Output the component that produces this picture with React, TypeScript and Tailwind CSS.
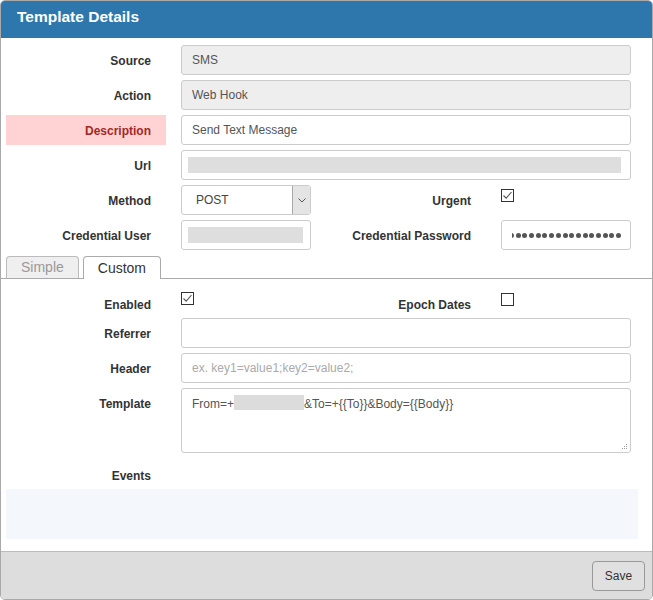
import React from "react";

const Check = ({ checked }: { checked?: boolean }) => (
  <div className="w-[13px] h-[13px] border border-[#333] bg-white flex items-center justify-center">
    {checked && (
      <svg width="11" height="11" viewBox="0 0 11 11">
        <path d="M1.5 5.5 L4.2 8.2 L9.5 2" fill="none" stroke="#555" strokeWidth="1.1" />
      </svg>
    )}
  </div>
);

const Label = ({ children, className = "" }: { children: React.ReactNode; className?: string }) => (
  <div className={`text-right pr-[15px] font-bold text-[12px] text-[#333] h-[30px] leading-[32px] ${className}`}>{children}</div>
);

const Field = ({ children, disabled, className = "" }: { children?: React.ReactNode; disabled?: boolean; className?: string }) => (
  <div
    className={`h-[30px] border border-[#ccc] rounded-[3px] flex items-center pl-[10px] text-[12px] text-[#555] ${
      disabled ? "bg-[#eeeeee]" : "bg-white"
    } ${className}`}
  >
    {children}
  </div>
);

const Blur = ({ className = "" }: { className?: string }) => (
  <div className={`h-[16px] bg-[#dedede] blur-[0.6px] ${className}`} />
);

export default function App() {
  return (
    <div className="w-[653px] h-[600px] bg-white font-['Liberation_Sans',Arial,sans-serif]">
      <div className="h-[600px] border border-[#a9a9a9] rounded-[5px] overflow-hidden flex flex-col">
        {/* Header */}
        <div className="h-[37px] bg-[#2e77ad] flex items-start pt-[7px] px-[16px] shrink-0">
          <span className="text-white font-bold text-[15.5px] leading-[18px]">Template Details</span>
        </div>

        {/* Main fields */}
        <div className="pt-[7px] pl-[5px] grid grid-cols-[160px_130px_160px_130px] gap-x-[15px] gap-y-[5px]">
          <Label>Source</Label>
          <Field disabled className="col-span-3">SMS</Field>

          <Label>Action</Label>
          <Field disabled className="col-span-3">Web Hook</Field>

          <Label className="bg-[#ffd3d3] !text-[#a32828]">Description</Label>
          <Field className="col-span-3">Send Text Message</Field>

          <Label>Url</Label>
          <Field className="col-span-3 !pl-[6px] pr-[9px]">
            <Blur className="w-full" />
          </Field>

          <Label>Method</Label>
          <div className="h-[30px] border border-[#ccc] rounded-[3px] flex bg-white overflow-hidden w-[130px]">
            <div className="flex-1 flex items-center pl-[14px] text-[12px] text-[#444]">POST</div>
            <div className="w-[18px] bg-[#e4e4e4] border-l border-[#aaa] flex items-center justify-center">
              <svg width="8" height="5" viewBox="0 0 8 5">
                <path d="M0.5 0.5 L4 4 L7.5 0.5" fill="none" stroke="#555" strokeWidth="1" />
              </svg>
            </div>
          </div>
          <Label>Urgent</Label>
          <div className="pt-[4px]">
            <Check checked />
          </div>

          <Label>Credential User</Label>
          <Field className="!pl-[6px] pr-[7px]">
            <Blur className="w-full" />
          </Field>
          <Label>Credential Password</Label>
          <Field className="pr-[9px]">
            <div className="flex-1 flex justify-end items-center gap-[1.7px] overflow-hidden">
              {Array.from({ length: 17 }).map((_, i) => (
                <span key={i} className="shrink-0 w-[5px] h-[5px] rounded-full bg-[#555]" />
              ))}
            </div>
          </Field>
        </div>

        {/* Tabs */}
        <div className="mt-[6px] h-[23px] flex items-end gap-[4px] pl-[5px] border-b border-[#aaa] shrink-0">
          <div className="h-[22px] px-[14px] flex items-center bg-[#efefef] border border-b-0 border-[#bbb] rounded-t-[4px] text-[14px] text-[#999]">
            Simple
          </div>
          <div className="h-[23px] -mb-px relative px-[14px] flex items-center bg-white border border-b-0 border-[#aaa] rounded-t-[4px] text-[14px] text-[#333]">
            Custom
          </div>
        </div>

        {/* Custom tab content */}
        <div className="pt-[10px] pl-[5px] grid grid-cols-[160px_130px_160px_130px] gap-x-[15px] gap-y-[5px]">
          <Label className="!leading-[14px] pt-[9px] !h-[24px]">Enabled</Label>
          <div className="pt-[3px]">
            <Check checked />
          </div>
          <Label className="!leading-[14px] pt-[9px] !h-[24px]">Epoch Dates</Label>
          <div className="pt-[4px]">
            <Check />
          </div>

          <Label>Referrer</Label>
          <Field className="col-span-3" />

          <Label>Header</Label>
          <Field className="col-span-3 text-[#aaa]">ex. key1=value1;key2=value2;</Field>

          <Label>Template</Label>
          <div className="col-span-3 h-[65px] border border-[#ccc] rounded-[3px] bg-white relative pl-[10px] pt-[7px] text-[12px] text-[#555] leading-[16px] flex items-start">
            <span>From=+</span>
            <span className="inline-block w-[70px] h-[15px] bg-[#dcdcdc] blur-[0.5px] mt-[-1px]" />
            <span>&amp;To=+{"{{To}}"}&amp;Body={"{{Body}}"}</span>
            <svg className="absolute right-[2px] bottom-[2px]" width="7" height="7" viewBox="0 0 7 7">
              <rect x="5" y="1" width="1" height="1" fill="#999" />
              <rect x="3" y="3" width="1" height="1" fill="#999" />
              <rect x="5" y="3" width="1" height="1" fill="#999" />
              <rect x="1" y="5" width="1" height="1" fill="#999" />
              <rect x="3" y="5" width="1" height="1" fill="#999" />
              <rect x="5" y="5" width="1" height="1" fill="#999" />
            </svg>
          </div>

          <Label className="mt-[2px] !h-[29px] !leading-[33px]">Events</Label>
        </div>
        <div className="ml-[5px] w-[632px] h-[50px] bg-[#f4f8fc]" />

        <div className="flex-1" />

        {/* Footer */}
        <div className="h-[48px] border-t border-[#bbb] bg-[#dddddd] flex justify-end items-start pt-[9px] pr-[7px] shrink-0">
          <div className="w-[53px] h-[30px] border border-[#999] rounded-[4px] bg-[#e0e0e0] flex items-center justify-center text-[12px] text-[#333]">
            Save
          </div>
        </div>
      </div>
    </div>
  );
}
